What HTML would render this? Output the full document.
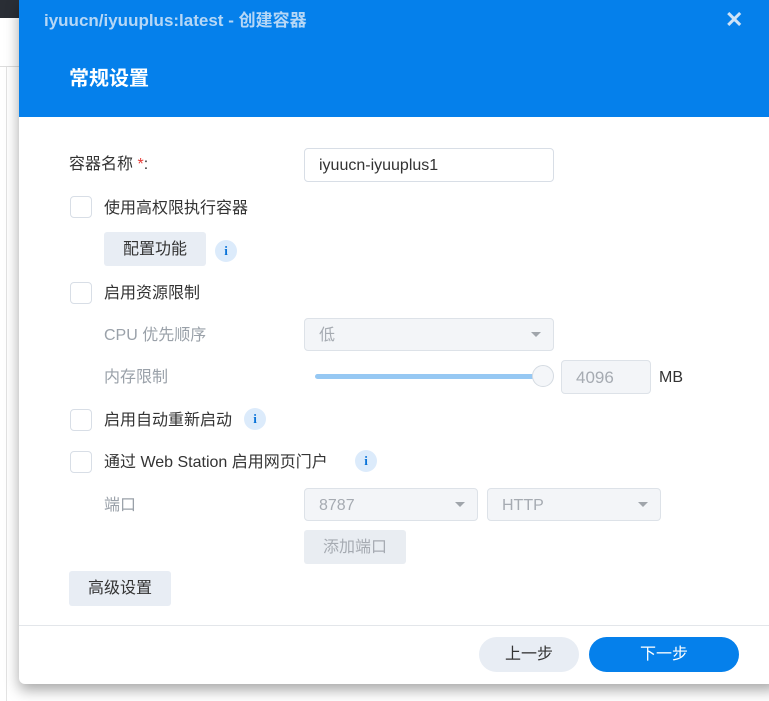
<!DOCTYPE html>
<html><head><meta charset="utf-8"><style>
*{box-sizing:border-box;margin:0;padding:0}
body{width:769px;height:701px;overflow:hidden;background:#fff;font-family:"Liberation Sans","Noto Sans CJK SC",sans-serif;position:relative;font-size:16px;color:#333}
.abs{position:absolute}
.dlg{position:absolute;left:19px;top:0;width:760px;height:684px;background:#fff;border-radius:0 0 6px 6px;box-shadow:0 6px 14px rgba(0,0,0,.35);overflow:hidden}
.hdr{position:absolute;left:0;top:0;width:100%;height:117px;background:#0580eb}
.cb{position:absolute;width:22px;height:22px;border:1.5px solid #d8dee6;border-radius:4px;background:#fff}
.lbl{position:absolute;white-space:nowrap;line-height:22px}
.gray{color:#9aa1a9}
.btn{position:absolute;background:#e8edf4;border-radius:3px;text-align:center;color:#333;line-height:36px}
.inp{position:absolute;border:1px solid #d8dee6;border-radius:4px;background:#fff;padding-left:14px;line-height:33px}
.dis{background:#f3f5f8;color:#a6abb2;border-color:#dde2e8}
.arr{position:absolute;right:12px;top:13px;border-left:5px solid transparent;border-right:5px solid transparent;border-top:5px solid #a0a5ab}
.info{position:absolute;width:22px;height:22px;border-radius:50%;background:#dcebfb;color:#0a73d9;font:bold 13px "Liberation Serif",serif;text-align:center;line-height:22px}
</style></head><body>
<div class="abs" style="left:0;top:0;width:19px;height:18px;background:#2a2e35"></div>
<div class="abs" style="left:0;top:66px;width:19px;height:1px;background:#ddd"></div>
<div class="abs" style="left:6px;top:67px;width:1px;height:634px;background:#e3e3e3"></div>
<div class="dlg">
<div class="hdr"></div>
<div class="lbl" style="left:25px;top:10px;color:#b6d7f6;font-weight:bold;font-size:17px">iyuucn/iyuuplus:latest - 创建容器</div>
<div class="lbl" style="left:706px;top:9px;color:#cfe3f7;font-size:22px;font-weight:bold">✕</div>
<div class="lbl" style="left:50px;top:66px;color:#fff;font-weight:bold;font-size:20px;line-height:26px">常规设置</div>

<div class="lbl" style="left:50px;top:154px">容器名称 <span style="color:#e53935">*</span>:</div>
<div class="inp" style="left:285px;top:148px;width:250px;height:34px;color:#333">iyuucn-iyuuplus1</div>

<div class="cb" style="left:51px;top:196px"></div>
<div class="lbl" style="left:85px;top:198px">使用高权限执行容器</div>
<div class="btn" style="left:85px;top:232px;width:102px;height:34px">配置功能</div>
<div class="info" style="left:196px;top:240px">i</div>

<div class="cb" style="left:51px;top:282px"></div>
<div class="lbl" style="left:85px;top:283px">启用资源限制</div>
<div class="lbl gray" style="left:85px;top:325px">CPU 优先顺序</div>
<div class="inp dis" style="left:285px;top:318px;width:250px;height:33px">低<div class="arr"></div></div>
<div class="lbl gray" style="left:85px;top:367px">内存限制</div>
<div class="abs" style="left:296px;top:374px;width:230px;height:5px;border-radius:3px;background:#96c8f3"></div>
<div class="abs" style="left:513px;top:365px;width:22px;height:22px;border-radius:50%;background:#f4f6f9;border:1px solid #d5dbe2"></div>
<div class="inp dis" style="left:542px;top:360px;width:90px;height:34px;font-size:17px">4096</div>
<div class="lbl" style="left:640px;top:367px;font-size:16px">MB</div>

<div class="cb" style="left:51px;top:409px"></div>
<div class="lbl" style="left:85px;top:410px">启用自动重新启动</div>
<div class="info" style="left:225px;top:408px">i</div>

<div class="cb" style="left:51px;top:451px"></div>
<div class="lbl" style="left:85px;top:452px">通过 Web Station 启用网页门户</div>
<div class="info" style="left:336px;top:450px">i</div>

<div class="lbl gray" style="left:85px;top:495px">端口</div>
<div class="inp dis" style="left:285px;top:488px;width:174px;height:33px">8787<div class="arr"></div></div>
<div class="inp dis" style="left:468px;top:488px;width:174px;height:33px">HTTP<div class="arr"></div></div>
<div class="btn" style="left:285px;top:530px;width:102px;height:34px;color:#a6abb2;background:#e9edf2">添加端口</div>

<div class="btn" style="left:50px;top:571px;width:102px;height:35px">高级设置</div>

<div class="abs" style="left:0;top:625px;width:100%;height:1px;background:#e3e6ea"></div>
<div class="btn" style="left:460px;top:637px;width:100px;height:35px;border-radius:18px">上一步</div>
<div class="btn" style="left:570px;top:637px;width:150px;height:35px;border-radius:18px;background:#0580eb;color:#fff">下一步</div>
</div>
</body></html>
